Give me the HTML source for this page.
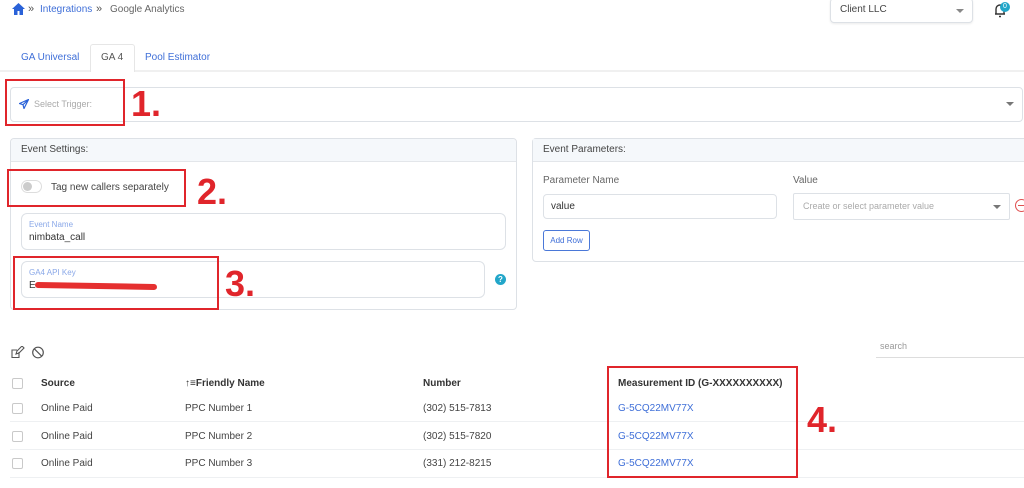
<!DOCTYPE html>
<html><head><meta charset="utf-8"><style>
*{box-sizing:border-box;margin:0;padding:0}
body{width:1024px;height:488px;overflow:hidden;background:#fff;font-family:"Liberation Sans",sans-serif;position:relative;color:#333}
.a{position:absolute;white-space:nowrap}
.red{position:absolute;border:2px solid #e0252b}
.num{position:absolute;color:#e0252b;font-weight:bold;font-size:36px;line-height:36px}
.box{position:absolute;border:1px solid #dde1e6;border-radius:4px;background:#fff}
.cb{position:absolute;width:11px;height:11px;border:1px solid #c9c9c9;border-radius:2px;left:12px}
.t{font-size:10px;color:#444}
.link{color:#3f6fd8}
.line{position:absolute;left:10px;width:1014px;height:1px;background:#eef0f2}
</style></head><body>
<svg class="a" style="left:12px;top:3px" width="13" height="12" viewBox="0 0 13 12"><path d="M6.5 0L0 6h2v6h3.5V8h2v4H11V6h2z" fill="#2a62d8"/></svg>
<div class="a" style="left:28px;top:3px;font-size:11px;color:#555">»</div>
<div class="a link" style="left:40px;top:4px;font-size:10px">Integrations</div>
<div class="a" style="left:96px;top:3px;font-size:11px;color:#555">»</div>
<div class="a" style="left:110px;top:4px;font-size:10px;color:#666">Google Analytics</div>
<div class="box" style="left:830px;top:-2px;width:143px;height:25px;box-shadow:0 1px 2px rgba(0,0,0,.08)"></div>
<div class="a" style="left:840px;top:4px;font-size:10px;color:#444">Client LLC</div>
<div class="a" style="left:956px;top:9px;border:4px solid transparent;border-top:4px solid #888"></div>
<svg class="a" style="left:991px;top:1px" width="20" height="18" viewBox="0 0 20 18"><path d="M4 13h10M5 13V8a4 4 0 018 0v5M8 15.5h2" stroke="#333" stroke-width="1.4" fill="none"/></svg>
<div class="a" style="left:1000px;top:2px;width:10px;height:10px;border-radius:50%;background:#22a6c9;color:#fff;font-size:7px;text-align:center;line-height:10px">0</div>
<div class="a" style="left:0;top:70px;width:1024px;height:2px;background:#f0f0f0"></div>
<div class="a" style="left:90px;top:44px;width:45px;height:28px;border:1px solid #e6e6e6;border-bottom:none;background:#fff;border-radius:3px 3px 0 0"></div>
<div class="a link" style="left:21px;top:52px;font-size:10px">GA Universal</div>
<div class="a" style="left:101px;top:52px;font-size:10px;color:#555">GA 4</div>
<div class="a link" style="left:145px;top:52px;font-size:10px">Pool Estimator</div>
<div class="box" style="left:10px;top:87px;width:1013px;height:35px"></div>
<svg class="a" style="left:19px;top:99px" width="10" height="10" viewBox="0 0 10 10"><path d="M9.5.5L.5 4.5l3.5 1.2L5 9.5z M4 5.7L9.5.5" stroke="#2a62d8" stroke-width="1.2" fill="none"/></svg>
<div class="a" style="left:34px;top:99px;font-size:9px;color:#aaa">Select Trigger:</div>
<div class="a" style="left:1006px;top:102px;border:4px solid transparent;border-top:4px solid #777"></div>
<div class="red" style="left:5px;top:79px;width:120px;height:47px"></div>
<div class="num" style="left:131px;top:86px">1.</div>
<div class="box" style="left:10px;top:138px;width:507px;height:172px"></div>
<div class="a" style="left:11px;top:139px;width:505px;height:23px;background:#f5f8fb;border-bottom:1px solid #e3e6ea;border-radius:4px 4px 0 0"></div>
<div class="a t" style="left:21px;top:144px">Event Settings:</div>
<div class="a" style="left:21px;top:180px;width:21px;height:13px;border:1px solid #ddd;border-radius:7px"></div>
<div class="a" style="left:23px;top:182px;width:9px;height:9px;border-radius:50%;background:#ccc"></div>
<div class="a t" style="left:51px;top:182px">Tag new callers separately</div>
<div class="red" style="left:7px;top:169px;width:179px;height:38px"></div>
<div class="num" style="left:197px;top:174px">2.</div>
<div class="box" style="left:21px;top:213px;width:485px;height:37px;border-radius:6px"></div>
<div class="a" style="left:29px;top:220px;font-size:8px;color:#8aa8e8">Event Name</div>
<div class="a t" style="left:29px;top:232px;color:#333">nimbata_call</div>
<div class="box" style="left:21px;top:261px;width:464px;height:37px;border-radius:6px"></div>
<div class="a" style="left:29px;top:268px;font-size:8px;color:#8aa8e8">GA4 API Key</div>
<div class="a t" style="left:29px;top:280px;color:#333">E</div>
<div class="a" style="left:35px;top:283px;width:122px;height:6px;background:#e53030;border-radius:3px;transform:rotate(1deg)"></div>
<div class="a" style="left:495px;top:274px;width:11px;height:11px;border-radius:50%;background:#22a6c9;color:#fff;font-size:8px;font-weight:bold;text-align:center;line-height:11px">?</div>
<div class="red" style="left:13px;top:256px;width:206px;height:54px"></div>
<div class="num" style="left:225px;top:266px">3.</div>
<div class="box" style="left:532px;top:138px;width:500px;height:124px"></div>
<div class="a" style="left:533px;top:139px;width:491px;height:23px;background:#f5f8fb;border-bottom:1px solid #e3e6ea"></div>
<div class="a t" style="left:543px;top:144px">Event Parameters:</div>
<div class="a t" style="left:543px;top:175px;color:#666">Parameter Name</div>
<div class="a t" style="left:793px;top:175px;color:#666">Value</div>
<div class="box" style="left:543px;top:194px;width:234px;height:25px"></div>
<div class="a t" style="left:551px;top:201px;color:#333">value</div>
<div class="box" style="left:793px;top:193px;width:217px;height:27px;border-radius:2px"></div>
<div class="a" style="left:803px;top:201px;font-size:9px;color:#aaa">Create or select parameter value</div>
<div class="a" style="left:993px;top:205px;border:4px solid transparent;border-top:4px solid #777"></div>
<div class="a" style="left:1015px;top:199px;width:13px;height:13px;border:1px solid #e05050;border-radius:50%"></div>
<div class="a" style="left:1018px;top:205px;width:7px;height:1px;background:#e05050"></div>
<div class="a" style="left:543px;top:230px;width:47px;height:21px;border:1px solid #4a78d8;border-radius:3px;font-size:8px;color:#3f6fd8;text-align:center;line-height:19px">Add Row</div>
<svg class="a" style="left:11px;top:346px" width="34" height="13" viewBox="0 0 34 13"><path d="M8 6v5.5H1V4h5M5 8l1-3 5-5 2 2-5 5z" stroke="#555" stroke-width="1.1" fill="none"/><circle cx="27" cy="6.5" r="5.3" stroke="#555" stroke-width="1.2" fill="none"/><path d="M23.3 2.8l7.4 7.4" stroke="#555" stroke-width="1.2"/></svg>
<div class="a" style="left:880px;top:341px;font-size:9px;color:#999">search</div>
<div class="a" style="left:876px;top:357px;width:148px;height:1px;background:#ddd"></div>
<div class="cb" style="top:378px"></div>
<div class="a" style="left:41px;top:378px;font-size:10px;font-weight:bold;color:#333">Source</div>
<div class="a" style="left:185px;top:378px;font-size:10px;font-weight:bold;color:#333">↑≡Friendly Name</div>
<div class="a" style="left:423px;top:378px;font-size:10px;font-weight:bold;color:#333">Number</div>
<div class="a" style="left:618px;top:378px;font-size:10px;font-weight:bold;color:#333">Measurement ID (G-XXXXXXXXXX)</div>
<div class="cb" style="top:403px"></div>
<div class="a t" style="left:41px;top:403px">Online Paid</div><div class="a t" style="left:185px;top:403px">PPC Number 1</div><div class="a t" style="left:423px;top:403px">(302) 515-7813</div><div class="a t link" style="left:618px;top:403px;color:#3f6fd8">G-5CQ22MV77X</div>
<div class="line" style="top:421px"></div>
<div class="cb" style="top:431px"></div>
<div class="a t" style="left:41px;top:431px">Online Paid</div><div class="a t" style="left:185px;top:431px">PPC Number 2</div><div class="a t" style="left:423px;top:431px">(302) 515-7820</div><div class="a t link" style="left:618px;top:431px;color:#3f6fd8">G-5CQ22MV77X</div>
<div class="line" style="top:449px"></div>
<div class="cb" style="top:458px"></div>
<div class="a t" style="left:41px;top:458px">Online Paid</div><div class="a t" style="left:185px;top:458px">PPC Number 3</div><div class="a t" style="left:423px;top:458px">(331) 212-8215</div><div class="a t link" style="left:618px;top:458px;color:#3f6fd8">G-5CQ22MV77X</div>
<div class="line" style="top:477px"></div>
<div class="red" style="left:607px;top:366px;width:191px;height:112px"></div>
<div class="num" style="left:807px;top:402px">4.</div>
</body></html>
